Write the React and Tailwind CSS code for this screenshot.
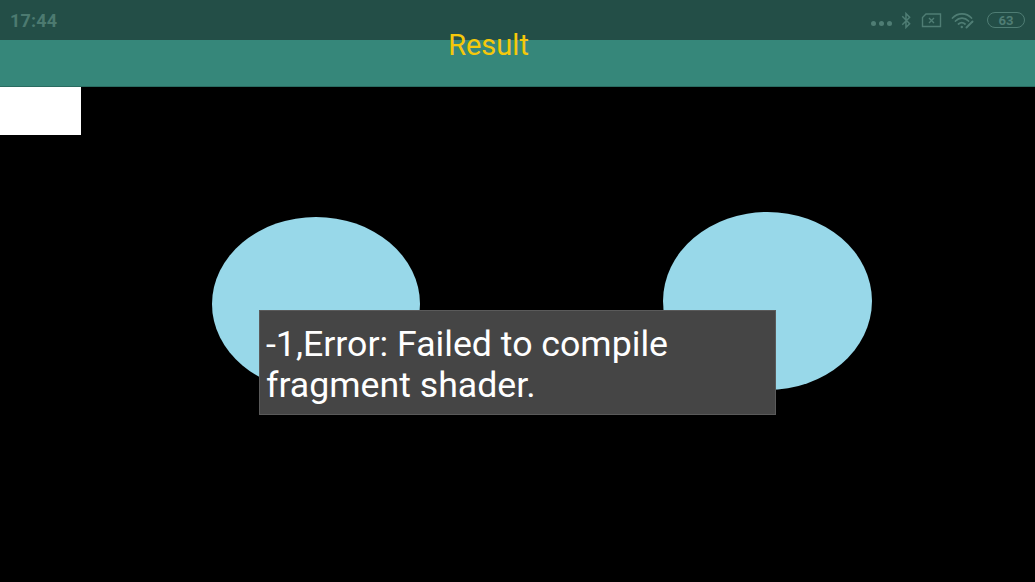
import React from "react";

function StatusIcons() {
  const c = "#4f7d74";
  return (
    <div className="flex items-center gap-[9px] pr-[10px]">
      <div className="flex items-center gap-[3px] mt-[6px]">
        <span className="w-[5px] h-[5px] rounded-full bg-[#4f7d74]" />
        <span className="w-[5px] h-[5px] rounded-full bg-[#4f7d74]" />
        <span className="w-[5px] h-[5px] rounded-full bg-[#4f7d74]" />
      </div>
      <svg width="11" height="19" viewBox="0 0 10 18" fill="none" stroke={c} strokeWidth="1.4">
        <path d="M1 5 L8 12 L4.5 15.5 L4.5 2.5 L8 6 L1 13" />
      </svg>
      <svg width="21" height="15" viewBox="0 0 21 15" fill="none" stroke={c} strokeWidth="1.4">
        <path d="M5 1 H19.5 V13.5 H1.5 V4.5 Z" />
        <path d="M8 5 L13 10 M13 5 L8 10" />
      </svg>
      <svg width="24" height="17" viewBox="0 0 24 17" fill="none" stroke={c} strokeWidth="1.8" strokeLinecap="round">
        <path d="M1.5 6 A13 13 0 0 1 20.5 6" />
        <path d="M4.5 9 A9 9 0 0 1 17.5 9" />
        <path d="M7.5 12 A5 5 0 0 1 14 12" />
        <circle cx="10.8" cy="15" r="1.2" fill={c} stroke="none" />
        <path d="M15.5 15.5 L21.5 9.5" strokeWidth="2" />
      </svg>
      <div className="w-[38px] h-[16px] rounded-full border-[1.5px] border-[#4f7d74] flex items-center justify-center text-[13px] leading-none font-bold text-[#4f7d74] ml-[3px]" style={{ fontFamily: "Roboto, sans-serif" }}>
        63
      </div>
    </div>
  );
}

export default function App() {
  return (
    <div className="w-[1035px] h-[582px] bg-black relative overflow-hidden" style={{ fontFamily: "Roboto, 'Noto Sans', sans-serif" }}>
      <div className="h-[40px] bg-[#234e47] flex items-center justify-between">
        <span className="pl-[10px] text-[18px] font-bold text-[#4c7a70] tracking-[0.2px]">17:44</span>
        <StatusIcons />
      </div>
      <div className="h-[47px] bg-[#36877a] border-b border-[#2a6c61] relative" />
      <div className="absolute left-0 right-0 top-[25px] flex justify-center pr-[58px]">
        <span className="text-[29px] leading-[40px] text-[#f5c80a]">Result</span>
      </div>
      <div className="w-[81px] h-[48px] bg-white" />

      <div className="absolute left-[212px] top-[217px] w-[208px] h-[174px] rounded-[50%] bg-[#98d8e9]" />
      <div className="absolute left-[663px] top-[212px] w-[209px] h-[178px] rounded-[50%] bg-[#98d8e9]" />

      <div className="absolute left-[259px] top-[310px] w-[517px] h-[105px] bg-[#454545] border border-[#5a5a5a] px-[6px] pt-[13px]">
        <p className="text-[35.7px] leading-[41px] text-white">-1,Error: Failed to compile fragment shader.</p>
      </div>
    </div>
  );
}
